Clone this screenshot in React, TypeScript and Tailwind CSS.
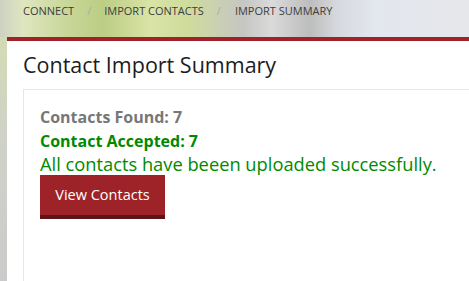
export default function App() {
  return (
    <div className="flex h-[281px] w-[469px] flex-col overflow-hidden bg-[linear-gradient(90deg,#cdd1c2_0%,#dfe6bf_5%,#c9d79a_14%,#bccd84_22%,#d9e4a6_32%,#cfdc9c_40%,#c9cfb4_47%,#c6c6c4_52%,#dadada_58%,#bdbdbd_66%,#d6d9de_72%,#e3e7ee_80%,#e6e7eb_100%)] font-['Open_Sans',sans-serif]">
      <nav className="flex h-[37px] shrink-0 items-start pl-[23px] text-[11px] leading-[22px] text-[#3d3d3d]">
        <span>CONNECT</span>
        <span className="pl-[13px] pr-[13px] text-[#a9a9a9]">/</span>
        <span>IMPORT CONTACTS</span>
        <span className="pl-[13px] pr-[14px] text-[#a9a9a9]">/</span>
        <span>IMPORT SUMMARY</span>
      </nav>
      <div className="flex flex-1">
        <div className="w-[7px] shrink-0 bg-[linear-gradient(180deg,#d2dbb4_0%,#cfd2c8_40%,#cbcbcb_100%)]" />
        <section className="flex flex-1 flex-col border-t-4 border-[#a0232a] bg-white">
          <h1 className="pl-[16px] pt-[10px] text-[21.5px] leading-[28px] text-[#1c1c1c]">
            Contact Import Summary
          </h1>
          <div className="ml-[16px] mt-[10px] flex-1 border-l border-t border-[#e6e6e6] pl-[16px] pt-[15px]">
            <p className="text-[16px] font-bold leading-[24px] text-[#777777]">Contacts Found: 7</p>
            <p className="text-[16px] font-bold leading-[24px] text-[#008a00]">Contact Accepted: 7</p>
            <p className="text-[18.3px] leading-[22px] text-[#008a00]">
              All contacts have beeen uploaded successfully.
            </p>
            <button className="h-[44px] w-[125px] border-b-[4px] border-[#5e1316] bg-[#9d2328] text-[14.5px] text-white">
              View Contacts
            </button>
          </div>
        </section>
      </div>
    </div>
  );
}
